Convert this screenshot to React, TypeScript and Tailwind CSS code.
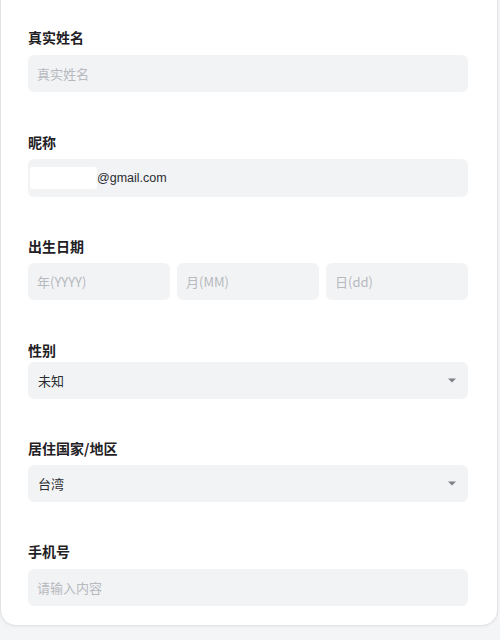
import React from "react";

const font = { fontFamily: '"Noto Sans CJK SC", "Noto Sans", sans-serif' };

function Label({ children }: { children: React.ReactNode }) {
  return (
    <div className="h-5 text-[14px] leading-5 font-semibold text-[#1f2125]">{children}</div>
  );
}

function Field({ children, className = "" }: { children: React.ReactNode; className?: string }) {
  return (
    <div className={`h-[37px] rounded-[6px] bg-[#f2f3f5] flex items-center text-[13px] ${className}`}>
      {children}
    </div>
  );
}

function Caret() {
  return (
    <svg width="8" height="5" viewBox="0 0 8 5" className="ml-auto mr-[12px]">
      <path d="M0 0.5 L8 0.5 L4 4.5 Z" fill="#7d8085" />
    </svg>
  );
}

export default function App() {
  return (
    <div className="min-h-[640px] w-[500px] bg-[#f4f5f7]" style={font}>
      <div className="w-[498px] bg-white rounded-b-[16px] border border-t-0 border-[#e2e3e6] shadow-[0_1px_3px_rgba(0,0,0,0.05)] pl-[27px] pr-[29px] pt-[27px] pb-[19px]">
        <Label>真实姓名</Label>
        <Field className="mt-[8px] pl-[9px] text-[#b6b9be]">真实姓名</Field>

        <div className="mt-[40px]">
          <Label>昵称</Label>
          <Field className="mt-[7px] h-[38px] text-[#2b2d31] pl-[2px]">
            <span className="inline-block w-[67px] h-[22px] bg-white rounded-[2px]" />
            <span className="text-[12.5px]" style={{ fontFamily: '"Liberation Sans", Arial, sans-serif' }}>
              @gmail.com
            </span>
          </Field>
        </div>

        <div className="mt-[39px]">
          <Label>出生日期</Label>
          <div className="mt-[7px] grid grid-cols-3 gap-[7px]">
            <Field className="pl-[9px] text-[#b6b9be]">年(YYYY)</Field>
            <Field className="pl-[9px] text-[#b6b9be]">月(MM)</Field>
            <Field className="pl-[9px] text-[#b6b9be]">日(dd)</Field>
          </div>
        </div>

        <div className="mt-[40px]">
          <Label>性别</Label>
          <Field className="mt-[2px] text-[#2b2d31] pl-[10px]">
            <span>未知</span>
            <Caret />
          </Field>
        </div>

        <div className="mt-[39px]">
          <Label>居住国家/地区</Label>
          <Field className="mt-[7px] text-[#2b2d31] pl-[10px]">
            <span>台湾</span>
            <Caret />
          </Field>
        </div>

        <div className="mt-[39px]">
          <Label>手机号</Label>
          <Field className="mt-[8px] pl-[9px] text-[#b6b9be]">请输入内容</Field>
        </div>
      </div>
    </div>
  );
}
